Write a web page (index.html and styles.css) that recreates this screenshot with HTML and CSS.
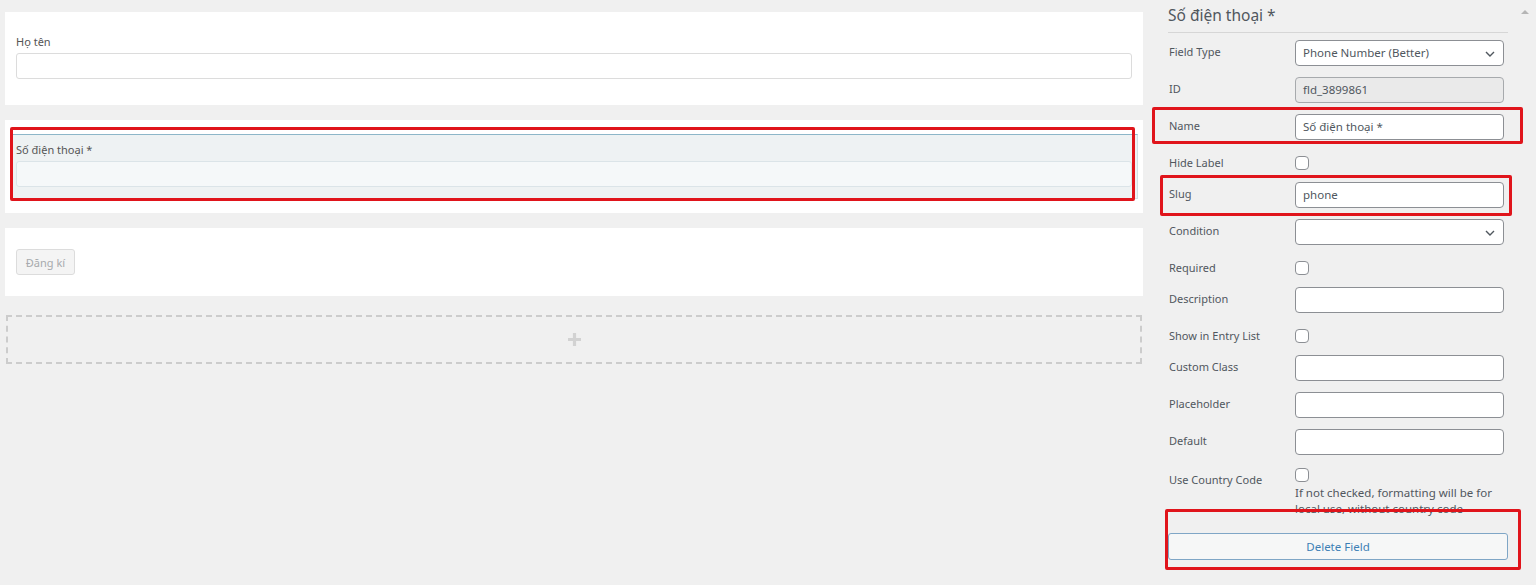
FILE: index.html
```html
<!DOCTYPE html>
<html lang="vi">
<head>
<meta charset="utf-8">
<title>Form builder</title>
<link rel="stylesheet" href="styles.css">
</head>
<body>
<div class="page">
  <main class="canvas">
    <section class="card">
      <div class="field">
        <label class="field-label">Họ tên</label>
        <div class="field-input"></div>
      </div>
    </section>
    <section class="card">
      <div class="field field-selected">
        <label class="field-label">Số điện thoại *</label>
        <div class="field-input"></div>
      </div>
    </section>
    <section class="card card-btn">
      <button class="submit-btn" type="button">Đăng kí</button>
    </section>
    <div class="add-row">
      <svg width="15" height="15" viewBox="0 0 15 15" aria-hidden="true"><path d="M7.5 1v13M1 7.5h13" stroke="#d2d2d2" stroke-width="3.2"/></svg>
    </div>
  </main>

  <aside class="panel">
    <h2 class="panel-title">Số điện thoại *</h2>
    <div class="rows">
      <div class="row">
        <span class="row-label">Field Type</span>
        <div class="ctl select">Phone Number (Better)<svg class="chev" width="10" height="6" viewBox="0 0 10 6"><path d="M1 1l4 4 4-4" fill="none" stroke="#50575e" stroke-width="1.4"/></svg></div>
      </div>
      <div class="row">
        <span class="row-label">ID</span>
        <div class="ctl ctl-readonly">fld_3899861</div>
      </div>
      <div class="row">
        <span class="row-label">Name</span>
        <div class="ctl">Số điện thoại *</div>
      </div>
      <div class="row row-check">
        <span class="row-label">Hide Label</span>
        <span class="checkbox"></span>
      </div>
      <div class="row">
        <span class="row-label">Slug</span>
        <div class="ctl">phone</div>
      </div>
      <div class="row">
        <span class="row-label">Condition</span>
        <div class="ctl select"><svg class="chev" width="10" height="6" viewBox="0 0 10 6"><path d="M1 1l4 4 4-4" fill="none" stroke="#50575e" stroke-width="1.4"/></svg></div>
      </div>
      <div class="row row-check">
        <span class="row-label">Required</span>
        <span class="checkbox"></span>
      </div>
      <div class="row">
        <span class="row-label">Description</span>
        <div class="ctl"></div>
      </div>
      <div class="row row-check">
        <span class="row-label">Show in Entry List</span>
        <span class="checkbox"></span>
      </div>
      <div class="row">
        <span class="row-label">Custom Class</span>
        <div class="ctl"></div>
      </div>
      <div class="row">
        <span class="row-label">Placeholder</span>
        <div class="ctl"></div>
      </div>
      <div class="row">
        <span class="row-label">Default</span>
        <div class="ctl"></div>
      </div>
      <div class="row row-country">
        <span class="row-label">Use Country Code</span>
        <div class="check-wrap">
          <span class="checkbox"></span>
          <p class="help">If not checked, formatting will be for local use, without country code</p>
        </div>
      </div>
    </div>
    <button class="delete-btn" type="button">Delete Field</button>
    <span class="scroll-up"></span>
  </aside>

  <span class="mark mark-left"></span>
  <span class="mark mark-name"></span>
  <span class="mark mark-slug"></span>
  <span class="mark mark-delete"></span>
</div>
</body>
</html>
```

FILE: styles.css
```css
* { box-sizing: border-box; }

html, body {
  margin: 0;
  padding: 0;
  background: #f0f0f0;
  font-family: "Noto Sans", "Open Sans", sans-serif;
  color: #50575e;
  overflow: hidden;
}

.page {
  position: relative;
  display: flex;
  width: 1536px;
  height: 585px;
}

/* ---------- left canvas ---------- */
.canvas {
  flex: 0 0 1138px;
  margin-left: 5px;
  padding-top: 12px;
  display: flex;
  flex-direction: column;
  gap: 15px;
}

.card {
  background: #fff;
  padding: 14px 5px;
}

.field {
  padding: 7px 5px 11px;
  border: 1px solid transparent;
}

.field-selected {
  background: #eef2f3;
  border-color: #d3dfe4;
  border-top-color: #8db6c8;
}

.field-label {
  display: block;
  font-size: 11px;
  line-height: 16px;
  color: #555;
}

.field-input {
  margin-top: 3px;
  height: 26px;
  border: 1px solid #dcdcdc;
  border-radius: 3px;
  background: #fff;
}

.field-selected .field-input {
  background: #f5f8f9;
  border-color: #dbe4e8;
}

.card-btn {
  padding: 21px 11px;
}

.submit-btn {
  display: block;
  width: 59px;
  height: 26px;
  padding: 0;
  font-family: inherit;
  font-size: 11px;
  color: #a7aaad;
  background: #f4f4f4;
  border: 1px solid #dcdcdc;
  border-radius: 3px;
}

.add-row {
  margin-top: 4px;
  margin-left: 1px;
  margin-right: 1px;
  height: 49px;
  border: 2px dashed #cccccc;
  display: flex;
  align-items: center;
  justify-content: center;
}

/* ---------- right panel ---------- */
.panel {
  position: relative;
  flex: 1;
  padding: 5px 28px 0 25px;
}

.panel-title {
  margin: 0;
  font-size: 15.5px;
  font-weight: 400;
  line-height: 20px;
  color: #50575e;
  padding-bottom: 7px;
  border-bottom: 1px solid #d6d6d6;
  margin-bottom: 7px;
}

.rows {
  display: flex;
  flex-direction: column;
  padding-left: 1px;
}

.row {
  display: flex;
  align-items: center;
  margin-bottom: 11px;
}

.row-label {
  flex: 0 0 126px;
  font-size: 11px;
  line-height: 16px;
  color: #50575e;
  margin-top: -3px;
}

.ctl {
  position: relative;
  width: 209px;
  height: 26px;
  border: 1px solid #8c8f94;
  border-radius: 4px;
  background: #fff;
  font-size: 11.5px;
  line-height: 24px;
  padding: 0 7px;
  color: #50575e;
}

.ctl-readonly {
  background: #eaeaea;
  border-color: #a7aaad;
}

.select .chev {
  position: absolute;
  right: 8px;
  top: 10px;
}

.row-check {
  height: 14px;
  margin-top: 5px;
  margin-bottom: 12px;
}

.row-check .row-label {
  margin-top: 0;
  line-height: 14px;
}

.checkbox {
  display: block;
  width: 14px;
  height: 14px;
  border: 1px solid #8c8f94;
  border-radius: 4px;
  background: #fff;
}

.row-country {
  align-items: flex-start;
  margin-top: 2px;
}

.row-country .row-label {
  margin-top: 4px;
}

.check-wrap {
  width: 209px;
}

.help {
  margin: 3px 0 0;
  font-size: 11.5px;
  line-height: 16px;
  color: #50575e;
}

.delete-btn {
  display: block;
  width: 340px;
  height: 27px;
  margin-top: 5px;
  padding: 0;
  font-family: inherit;
  font-size: 11.5px;
  color: #3d7fb5;
  background: #f6f7f7;
  border: 1px solid #7fa6c6;
  border-radius: 3px;
}

.scroll-up {
  position: absolute;
  top: 10px;
  right: 7px;
  width: 0;
  height: 0;
  border-left: 4px solid transparent;
  border-right: 4px solid transparent;
  border-bottom: 4px solid #b5b5b5;
}

/* ---------- red annotation marks ---------- */
.mark {
  position: absolute;
  border: 3px solid #e0141b;
  border-radius: 2px;
  pointer-events: none;
}

.mark-left   { left: 10px;   top: 127px; width: 1125px; height: 74px; }
.mark-name   { left: 1152px; top: 107px; width: 371px;  height: 37px; }
.mark-slug   { left: 1160px; top: 175px; width: 352px;  height: 41px; }
.mark-delete { left: 1165px; top: 509px; width: 356px;  height: 61px; }
```
